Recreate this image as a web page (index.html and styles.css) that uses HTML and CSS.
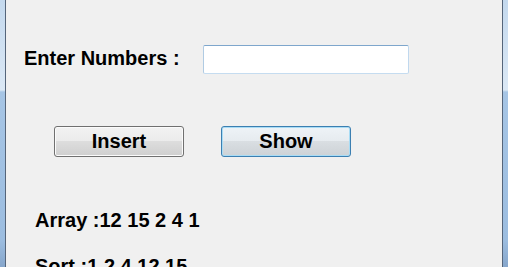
FILE: index.html
```html
<!DOCTYPE html>
<html lang="en">

<head>
    <meta charset="UTF-8" />
    <meta name="viewport" content="width=device-width, initial-scale=1.0" />
    <link rel="stylesheet" href="styles.css">
    <title>Sort numbers</title>
</head>

<body>
    <div class="window">
        <div class="frame frame-left"></div>

        <div class="content">
            <div class="row-input">
                <label class="label" for="numbers">Enter Numbers :</label>
                <input type="text" id="numbers" class="field" />
            </div>

            <div class="row-buttons">
                <button type="button" class="btn">Insert</button>
                <button type="button" class="btn btn-default">Show</button>
            </div>

            <p class="result">Array :12 15 2 4 1</p>
            <p class="result">Sort :1 2 4 12 15</p>
        </div>

        <div class="frame frame-right"></div>
    </div>
</body>

</html>
```

FILE: styles.css
```css
* {
    margin: 0;
    padding: 0;
    box-sizing: border-box;
}

body {
    font-family: 'Liberation Sans', Arial, sans-serif;
    background: #f0f0f0;
    overflow: hidden;
}

.window {
    display: flex;
    height: 267px;
    width: 508px;
}

.frame {
    width: 6px;
    flex-shrink: 0;
    background: linear-gradient(to bottom, #c4d9ee 0, #dbe8f5 90px, #a6c5e5 92px, #9cbde0 240px, #86a6cb 267px);
}

.frame-left {
    border-right: 1px solid #55657a;
}

.frame-right {
    border-left: 1px solid #55657a;
}

.content {
    flex: 1;
    background: #f0f0f0;
    font-weight: 700;
    font-size: 20px;
    line-height: 23px;
    color: #000;
    overflow: hidden;
}

.row-input {
    display: flex;
    align-items: flex-start;
    margin-top: 45px;
    padding-left: 18px;
}

.label {
    width: 179px;
    padding-top: 2px;
}

.field {
    width: 206px;
    height: 29px;
    background: #fff;
    border: 1px solid;
    border-color: #7ea6cc #c0d8ee #c5dcf0 #b0cbe3;
    border-radius: 2px;
    outline: none;
}

.row-buttons {
    display: flex;
    gap: 37px;
    margin-top: 52px;
    padding-left: 48px;
}

.btn {
    width: 130px;
    height: 31px;
    font-family: inherit;
    font-weight: 700;
    font-size: 20px;
    line-height: 23px;
    color: #000;
    border: 1px solid #707070;
    border-radius: 3px;
    background: linear-gradient(to bottom, #f2f2f2 0%, #ebebeb 50%, #dddddd 50%, #cfcfcf 100%);
    box-shadow: inset 0 0 0 1px #fbfbfb;
}

.btn-default {
    border-color: #3c7fb1;
    box-shadow: inset 0 0 0 1px #a8dcf5;
    background: linear-gradient(to bottom, #eef3f7 0%, #e6ebef 50%, #d9dee2 50%, #cdd2d6 100%);
}

.result {
    padding-left: 29px;
    margin-top: 23px;
}

.row-buttons + .result {
    margin-top: 52px;
}
```
